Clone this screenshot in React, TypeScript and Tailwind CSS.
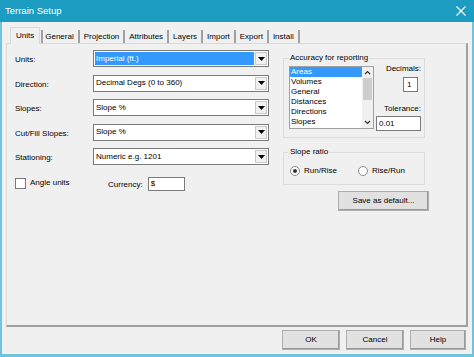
import React from 'react';

const tabs = ['Units', 'General', 'Projection', 'Attributes', 'Layers', 'Import', 'Export', 'Install'];

const rows = [
  { label: 'Units:', value: 'Imperial (ft.)', selected: true },
  { label: 'Direction:', value: 'Decimal Degs (0 to 360)' },
  { label: 'Slopes:', value: 'Slope %' },
  { label: 'Cut/Fill Slopes:', value: 'Slope %' },
  { label: 'Stationing:', value: 'Numeric e.g. 1201' },
];

const listItems = ['Areas', 'Volumes', 'General', 'Distances', 'Directions', 'Slopes', 'Cut/Fill Slopes'];

function Arrow() {
  return (
    <svg width="7" height="4" viewBox="0 0 7 4">
      <path d="M0 0h7L3.5 4z" fill="#000" />
    </svg>
  );
}

function Combo({ value, selected }: { value: string; selected?: boolean }) {
  return (
    <div className="flex h-[17px] w-[176px] items-center border border-[#7a7a7a] bg-white p-[1px]">
      <div className={`flex h-full flex-1 items-center pl-[1px] ${selected ? 'bg-[#3399ff] text-white' : ''}`}>
        <span className="leading-none">{value}</span>
      </div>
      <div className="ml-[1px] flex h-full w-[12px] items-center justify-center border border-[#c8c8c8] bg-[#f0f0f0]">
        <Arrow />
      </div>
    </div>
  );
}

function Btn({ label, w }: { label: string; w: string }) {
  return (
    <div className={`flex h-[20px] ${w} items-center justify-center border border-[#adadad] bg-[#e1e1e1] shadow-[inset_-1px_-1px_0_#9a9a9a]`}>
      {label}
    </div>
  );
}

function Radio({ checked }: { checked?: boolean }) {
  return (
    <div className="flex h-[10px] w-[10px] shrink-0 items-center justify-center rounded-full border border-[#8a8a8a] bg-white">
      {checked && <div className="h-[4px] w-[4px] rounded-full bg-[#333]" />}
    </div>
  );
}

export default function App() {
  return (
    <div
      className="flex h-[357px] w-[474px] flex-col bg-[#6fc6dc] text-[8px] leading-[10px] text-black"
      style={{ fontFamily: '"Liberation Sans", Arial, sans-serif' }}
    >
      {/* Title bar */}
      <div className="flex h-[22px] shrink-0 items-center justify-between bg-[#1b9cc0] pl-[5px] pr-[8px] text-white">
        <span className="text-[9.5px]">Terrain Setup</span>
        <svg width="10" height="10" viewBox="0 0 10 10">
          <path d="M0.5 0.5l9 9M9.5 0.5l-9 9" stroke="#fff" strokeWidth="1.2" />
        </svg>
      </div>

      <div className="mx-[2px] mb-[3px] flex flex-1 flex-col bg-[#f0f0f0] px-[4px]">
        {/* Tabs */}
        <div className="mt-[5px] flex h-[16px] items-end pl-[4px]">
          {tabs.map((t, i) => (
            <div
              key={t}
              className={
                i === 0
                  ? 'relative -mb-px flex h-[17px] items-center border-x border-t border-[#d9d9d9] bg-[#f0f0f0] px-[5px]'
                  : 'flex h-[13px] items-center border-r-2 border-[#a0a0a0] px-[4px]'
              }
            >
              {i === 1 && <span className="-ml-[3px] mr-[2px] h-[13px] border-l-2 border-[#a0a0a0]" />}
              {t}
            </div>
          ))}
        </div>

        {/* Panel */}
        <div className="flex h-[284px] border border-[#d9d9d9] border-b-2 border-r-2 border-b-[#a0a0a0] border-r-[#a0a0a0] pl-[8px] pt-[6px]">
          {/* Left column */}
          <div className="flex w-[268px] flex-col">
            {rows.map((r) => (
              <div key={r.label} className="flex h-[24.5px] items-start">
                <span className="mt-[5px] w-[78px]">{r.label}</span>
                <Combo value={r.value} selected={r.selected} />
              </div>
            ))}
            <div className="mt-[4px] flex items-center">
              <div className="h-[11px] w-[11px] shrink-0 border border-[#7a7a7a] bg-white" />
              <span className="ml-[4px] w-[78px] -mt-[2px]">Angle units</span>
              <span className="mt-[2px]">Currency:</span>
              <div className="ml-[5px] flex h-[14px] w-[37px] items-center border border-[#7a7a7a] bg-white pl-[2px]">$</div>
            </div>
          </div>

          {/* Right column */}
          <div className="flex flex-col">
            <div className="relative mt-[8px] h-[80px] w-[142px] border border-[#dcdcdc]">
              <span className="absolute -top-[6px] left-[5px] bg-[#f0f0f0] px-[1px]">Accuracy for reporting</span>
              <div className="flex">
                <div className="ml-[5px] mt-[7px] flex h-[63px] w-[85px] overflow-hidden border border-[#a0a0a0] bg-white">
                  <div className="flex flex-1 flex-col">
                    {listItems.map((it, i) => (
                      <div key={it} className={`h-[10px] shrink-0 pl-[1px] leading-[10px] ${i === 0 ? 'bg-[#3399ff] text-white' : ''}`}>
                        {it}
                      </div>
                    ))}
                  </div>
                  <div className="flex w-[11px] flex-col items-center bg-[#f0f0f0]">
                    <svg width="7" height="11" viewBox="0 0 7 11">
                      <path d="M1 7l2.5-2.5L6 7" stroke="#333" strokeWidth="1.2" fill="none" />
                    </svg>
                    <div className="h-[22px] w-[9px] bg-[#cdcdcd]" />
                    <div className="flex-1" />
                    <svg width="7" height="11" viewBox="0 0 7 11">
                      <path d="M1 4l2.5 2.5L6 4" stroke="#333" strokeWidth="1.2" fill="none" />
                    </svg>
                  </div>
                </div>
                <div className="flex flex-1 flex-col items-end pr-[3px]">
                  <span className="mt-[5px]">Decimals:</span>
                  <div className="mr-[3px] mt-[3px] flex h-[15px] w-[15px] items-center border border-[#7a7a7a] bg-white pl-[3px]">1</div>
                  <span className="mt-[12px]">Tolerance:</span>
                  <div className="mt-[2px] flex h-[15px] w-[45px] items-center border border-[#7a7a7a] bg-white pl-[2px]">0.01</div>
                </div>
              </div>
            </div>

            <div className="relative mt-[14px] flex h-[33px] w-[142px] items-center border border-[#dcdcdc] pl-[6px] pt-[5px]">
              <span className="absolute -top-[6px] left-[5px] bg-[#f0f0f0] px-[1px]">Slope ratio</span>
              <Radio checked />
              <span className="ml-[4px] w-[54px]">Run/Rise</span>
              <Radio />
              <span className="ml-[4px]">Rise/Run</span>
            </div>

            <div className="ml-[55px] mt-[6px]">
              <Btn label="Save as default..." w="w-[91px]" />
            </div>
          </div>
        </div>

        {/* Bottom buttons */}
        <div className="mt-[3px] flex justify-end gap-[6px] pr-[2px]">
          <Btn label="OK" w="w-[58px]" />
          <Btn label="Cancel" w="w-[58px]" />
          <Btn label="Help" w="w-[56px]" />
        </div>
      </div>
    </div>
  );
}
